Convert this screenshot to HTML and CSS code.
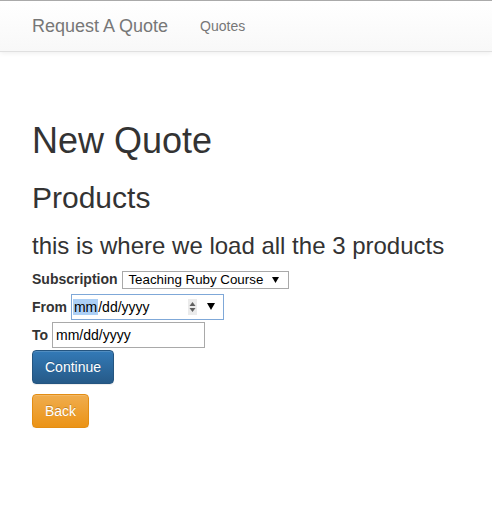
FILE: index.html
```html
<!DOCTYPE html>
<html lang="en">
<head>
<meta charset="utf-8">
<title>Request A Quote</title>
<link rel="stylesheet" href="styles.css">
</head>
<body>
<nav class="navbar">
  <a class="brand" href="#">Request A Quote</a>
  <a class="nav-link" href="#">Quotes</a>
</nav>
<main class="content">
  <h1>New Quote</h1>
  <h2>Products</h2>
  <h3>this is where we load all the 3 products</h3>
  <form class="quote-form">
    <div class="row">
      <label class="lbl">Subscription</label>
      <span class="select"><span class="select-text">Teaching Ruby Course</span><svg class="select-arrow" width="7" height="6" viewBox="0 0 7 6"><path d="M0 0H7L3.5 6Z" fill="#000"/></svg></span>
    </div>
    <div class="row">
      <label class="lbl">From</label>
      <span class="date focused"><span class="date-text"><span class="sel">mm</span>/dd/yyyy</span><svg class="spin" width="9" height="16" viewBox="0 0 9 16"><rect width="9" height="16" fill="#ebebeb"/><path d="M1.5 7H7.5L4.5 3Z" fill="#606060"/><path d="M1.5 9H7.5L4.5 13Z" fill="#606060"/></svg><svg class="drop" width="8" height="7" viewBox="0 0 8 7"><path d="M0 0H8L4 7Z" fill="#000"/></svg></span>
    </div>
    <div class="row">
      <label class="lbl">To</label>
      <span class="date"><span class="date-text">mm/dd/yyyy</span></span>
    </div>
    <div class="actions">
      <button type="button" class="btn btn-primary">Continue</button>
      <a href="#" class="btn btn-warning">Back</a>
    </div>
  </form>
</main>
</body>
</html>
```
FILE: styles.css
```css
* { box-sizing: border-box; }
html, body { margin: 0; padding: 0; background: #fff; }
body {
  font-family: "Liberation Sans", Arial, sans-serif;
  font-size: 14px;
  line-height: 20px;
  color: #333;
}
a { text-decoration: none; }

.navbar {
  display: flex;
  height: 52px;
  padding-left: 17px;
  border-top: 1px solid #aaaaaa;
  border-bottom: 1px solid #e0e0e0;
  background: linear-gradient(#ffffff, #f8f8f8);
  box-shadow: 0 1px 5px rgba(0,0,0,.075);
}
.brand {
  padding: 15px;
  font-size: 18px;
  line-height: 20px;
  color: #777;
  text-shadow: 0 1px 0 rgba(255,255,255,.25);
}
.nav-link {
  padding: 15px 15px 15px 17px;
  color: #777;
  line-height: 20px;
}

.content { padding: 49px 32px 0; }
h1, h2, h3 { font-weight: 500; line-height: 1.1; margin: 20px 0 10px; }
h1 { font-size: 36px; }
h2 { font-size: 30px; }
h3 { font-size: 24px; margin-top: 19px; }

.quote-form { margin: 0; }
.row { line-height: 20px; }
.lbl {
  display: inline-block;
  font-weight: bold;
  margin-bottom: 5px;
}

.select {
  display: inline-flex;
  align-items: center;
  justify-content: space-between;
  width: 167px;
  height: 18px;
  padding: 0 9px 0 5px;
  margin-left: 1px;
  border: 1px solid #a9a9a9;
  background: #fff;
  font-size: 13.333px;
  line-height: 16px;
  color: #000;
}
.select-text { white-space: nowrap; }
.select-arrow { flex: none; }

.date {
  display: inline-flex;
  align-items: center;
  width: 153px;
  height: 26px;
  padding: 2px 3px;
  border: 1px solid #a9a9a9;
  background: #fff;
  color: #000;
}
.date-text { flex: 1; line-height: 20px; }
.date.focused {
  padding-left: 1px;
  padding-right: 0;
  border-color: #7fa8d8;
}
.sel { background: #add0f6; padding: 0 1px; }
.spin { flex: none; margin-right: 10px; }
.drop { flex: none; margin-right: 8px; }

.actions {
  display: flex;
  flex-direction: column;
  align-items: flex-start;
  gap: 10px;
}
.btn {
  display: inline-block;
  padding: 6px 12px;
  font-family: inherit;
  font-size: 14px;
  line-height: 20px;
  border: 1px solid transparent;
  border-radius: 4px;
  color: #fff;
  text-shadow: 0 -1px 0 rgba(0,0,0,.2);
  box-shadow: inset 0 1px 0 rgba(255,255,255,.15), 0 1px 1px rgba(0,0,0,.075);
  cursor: pointer;
}
.btn-primary {
  background: linear-gradient(#337ab7, #265a88);
  border-color: #245580;
}
.btn-warning {
  background: linear-gradient(#f0ad4e, #eb9316);
  border-color: #e38d13;
}
```
